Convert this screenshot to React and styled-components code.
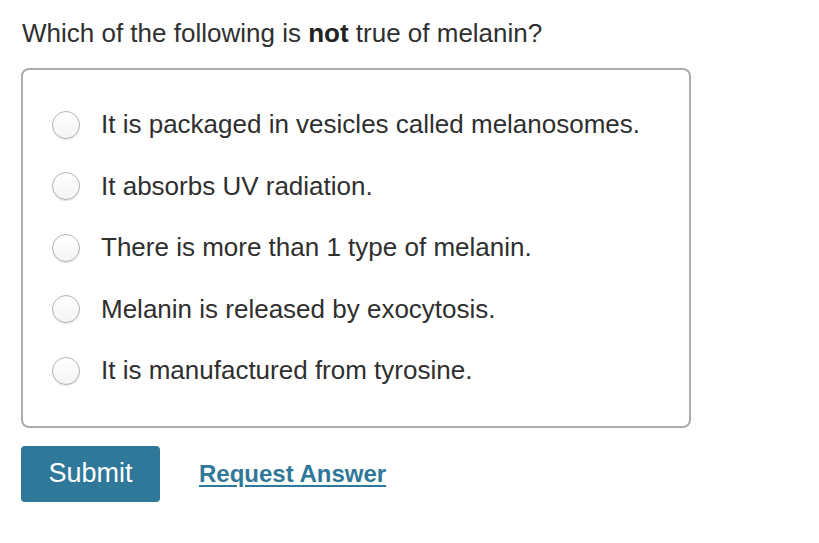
import React from "react";
import styled, { createGlobalStyle } from "styled-components";

const GlobalStyle = createGlobalStyle`
  html, body {
    margin: 0;
    padding: 0;
    background: #ffffff;
  }
  body {
    font-family: "Liberation Sans", Arial, sans-serif;
    color: #333333;
  }
`;

const options = [
  "It is packaged in vesicles called melanosomes.",
  "It absorbs UV radiation.",
  "There is more than 1 type of melanin.",
  "Melanin is released by exocytosis.",
  "It is manufactured from tyrosine.",
];

const Page = styled.div`
  padding: 19px 21px;
  width: 670px;
`;

const Question = styled.p`
  margin: 0 0 21px 1px;
  font-size: 26px;
  line-height: 28px;
  color: #2f2f2f;

  strong {
    font-weight: bold;
    color: #222;
  }
`;

const Choices = styled.div`
  border: 2px solid #ababab;
  border-radius: 8px;
  padding: 24px 0 24px 29px;
  display: flex;
  flex-direction: column;
`;

const Choice = styled.label`
  display: flex;
  align-items: center;
  height: 61.5px;
  font-size: 26px;
  color: #2f2f2f;
  cursor: pointer;
`;

const Radio = styled.span`
  width: 26px;
  height: 26px;
  border-radius: 50%;
  border: 1px solid #b3b3b3;
  background: linear-gradient(#ffffff, #f4f4f4);
  box-shadow: 0 1px 1px rgba(0, 0, 0, 0.12);
  margin-right: 21px;
  flex-shrink: 0;
`;

const Actions = styled.div`
  display: flex;
  align-items: center;
  gap: 39px;
  margin-top: 18px;
`;

const Button = styled.button`
  width: 139px;
  height: 56px;
  border: none;
  border-radius: 4px;
  background: #2f7899;
  color: #ffffff;
  font-family: "Liberation Sans", Arial, sans-serif;
  font-size: 27px;
  cursor: pointer;
`;

const Link = styled.a`
  color: #2f7899;
  font-weight: bold;
  font-size: 24px;
  text-decoration: underline;
  text-underline-offset: 3px;
  cursor: pointer;
`;

export default function App() {
  return (
    <>
      <GlobalStyle />
      <Page>
        <Question>
          Which of the following is <strong>not</strong> true of melanin?
        </Question>
        <Choices>
          {options.map((o) => (
            <Choice key={o}>
              <Radio />
              {o}
            </Choice>
          ))}
        </Choices>
        <Actions>
          <Button>Submit</Button>
          <Link>Request Answer</Link>
        </Actions>
      </Page>
    </>
  );
}
